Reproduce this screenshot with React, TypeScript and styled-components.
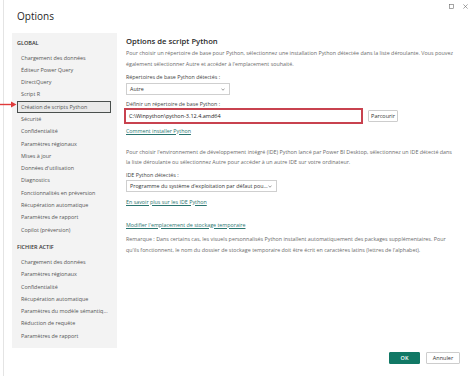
import React from "react";
import styled, { createGlobalStyle } from "styled-components";

const Global = createGlobalStyle`
  html, body { margin: 0; padding: 0; background: #ffffff; }
  body { font-family: "Open Sans", "Noto Sans", sans-serif; }
  * { box-sizing: border-box; }
`;

const Screen = styled.div`
  position: relative;
  width: 474px;
  height: 376px;
  overflow: hidden;
  background: #ffffff;
  padding-left: 3px;
`;

const Window = styled.div`
  height: 100%;
  border-left: 1px solid #e4e4e4;
  display: flex;
  flex-direction: column;
`;

const TitleBar = styled.div`
  height: 33px;
  display: flex;
  justify-content: space-between;
  align-items: flex-start;
  padding: 0 6px 0 13px;
`;

const Title = styled.h1`
  margin: 10px 0 0;
  font-size: 10px;
  font-weight: 400;
  line-height: 12px;
  color: #1f1f1f;
`;

const Controls = styled.div`
  display: flex;
  gap: 9px;
  padding-top: 4px;
  color: #6a6a6a;
`;

const Body = styled.div`
  height: 315px;
  display: flex;
  gap: 9px;
  padding-left: 8px;
`;

const Sidebar = styled.nav`
  width: 105px;
  height: 100%;
  background: #f3f3f3;
  padding: 4px 6px 0 5px;
`;

const SectionHead = styled.div<{ $first?: boolean }>`
  font-size: 5.5px;
  line-height: 12px;
  font-weight: 600;
  color: #333;
  margin-top: ${(p) => (p.$first ? "0" : "5.5px")};
  margin-bottom: 2.5px;
`;

const NavItem = styled.div<{ $active?: boolean }>`
  height: 12.3px;
  line-height: 11px;
  font-size: 5.4px;
  color: #555;
  padding-left: 3px;
  border: 1px solid ${(p) => (p.$active ? "#4a4f4d" : "transparent")};
  background: ${(p) => (p.$active ? "#e9e9e9" : "transparent")};
  white-space: nowrap;
  overflow: hidden;
`;

const Content = styled.main`
  flex: 1;
  padding-right: 18px;
  padding-top: 2px;
`;

const Heading = styled.h2`
  margin: 0;
  font-size: 7.7px;
  line-height: 12px;
  font-weight: 600;
  color: #2b2b2b;
`;

const Para = styled.p<{ $mt: number }>`
  margin: ${(p) => p.$mt}px 0 0;
  font-size: 5.35px;
  line-height: 10.5px;
  color: #6b6b6b;
`;

const Label = styled.div<{ $mt: number }>`
  margin-top: ${(p) => p.$mt}px;
  font-size: 5.35px;
  line-height: 8px;
  color: #444;
`;

const Select = styled.div<{ $w: number; $mt: number }>`
  margin-top: ${(p) => p.$mt}px;
  width: ${(p) => p.$w}px;
  height: 12px;
  border: 1px solid #cfcfcf;
  background: #fff;
  display: flex;
  align-items: center;
  justify-content: space-between;
  padding: 0 4px 0 3px;
  font-size: 5.35px;
  color: #333;
`;

const InputRow = styled.div`
  display: flex;
  align-items: center;
  gap: 5px;
  margin-left: -2px;
`;

const Highlight = styled.div`
  width: 239px;
  height: 16px;
  border: 2px solid #c8424f;
  background: #fff;
  display: flex;
  align-items: center;
  padding-left: 3px;
  font-size: 5.5px;
  color: #222;
`;

const Button = styled.button<{ $primary?: boolean; $w: number }>`
  width: ${(p) => p.$w}px;
  height: 12px;
  padding: 0;
  font-family: inherit;
  font-size: 5.5px;
  font-weight: ${(p) => (p.$primary ? 600 : 500)};
  color: ${(p) => (p.$primary ? "#fff" : "#333")};
  background: ${(p) => (p.$primary ? "#117865" : "#fff")};
  border: 1px solid ${(p) => (p.$primary ? "#117865" : "#cdcdcd")};
  border-radius: 1px;
`;

const Link = styled.a<{ $mt: number }>`
  display: block;
  margin-top: ${(p) => p.$mt}px;
  font-size: 5.35px;
  line-height: 9px;
  color: #2a7570;
  text-decoration: underline;
`;

const Footer = styled.div`
  display: flex;
  justify-content: flex-end;
  gap: 6px;
  padding: 4px 14px 0 0;
`;

const Arrow = styled.svg`
  position: absolute;
  left: 0;
  top: 101px;
`;

const Chevron = () => (
  <svg width="4" height="3" viewBox="0 0 4 3">
    <path d="M0.5 0.8 L2 2.2 L3.5 0.8" fill="none" stroke="#555" strokeWidth="0.6" />
  </svg>
);

const globalItems = [
  "Chargement des données",
  "Éditeur Power Query",
  "DirectQuery",
  "Script R",
  "Création de scripts Python",
  "Sécurité",
  "Confidentialité",
  "Paramètres régionaux",
  "Mises à jour",
  "Données d'utilisation",
  "Diagnostics",
  "Fonctionnalités en préversion",
  "Récupération automatique",
  "Paramètres de rapport",
  "Copilot (préversion)",
];

const fileItems = [
  "Chargement des données",
  "Paramètres régionaux",
  "Confidentialité",
  "Récupération automatique",
  "Paramètres du modèle sémantiq...",
  "Réduction de requête",
  "Paramètres de rapport",
];

export default function App() {
  return (
    <Screen>
      <Global />
      <Window>
        <TitleBar>
          <Title>Options</Title>
          <Controls>
            <svg width="5" height="5" viewBox="0 0 5 5">
              <rect x="0.5" y="0.5" width="4" height="4" fill="none" stroke="#6a6a6a" strokeWidth="0.6" />
            </svg>
            <svg width="5" height="5" viewBox="0 0 5 5">
              <path d="M0.4 0.4 L4.6 4.6 M4.6 0.4 L0.4 4.6" stroke="#6a6a6a" strokeWidth="0.6" />
            </svg>
          </Controls>
        </TitleBar>
        <Body>
          <Sidebar>
            <SectionHead $first>GLOBAL</SectionHead>
            {globalItems.map((t) => (
              <NavItem key={t} $active={t === "Création de scripts Python"}>
                {t}
              </NavItem>
            ))}
            <SectionHead>FICHIER ACTIF</SectionHead>
            {fileItems.map((t, i) => (
              <NavItem key={t + i}>{t}</NavItem>
            ))}
          </Sidebar>
          <Content>
            <Heading>Options de script Python</Heading>
            <Para $mt={1.25}>
              Pour choisir un répertoire de base pour Python, sélectionnez une installation Python détectée dans la
              liste déroulante. Vous pouvez également sélectionner Autre et accéder à l'emplacement souhaité.
            </Para>
            <Label $mt={3.75}>Répertoires de base Python détectés :</Label>
            <Select $w={104} $mt={2}>
              <span>Autre</span>
              <Chevron />
            </Select>
            <Label $mt={4.5}>Définir un répertoire de base Python :</Label>
            <InputRow>
              <Highlight>C:\Winpython\python-3.12.4.amd64</Highlight>
              <Button $w={30}>Parcourir</Button>
            </InputRow>
            <Link $mt={3}>Comment installer Python</Link>
            <Para $mt={11}>
              Pour choisir l'environnement de développement intégré (IDE) Python lancé par Power BI Desktop,
              sélectionnez un IDE détecté dans la liste déroulante ou sélectionnez Autre pour accéder à un autre IDE
              sur votre ordinateur.
            </Para>
            <Label $mt={3.5}>IDE Python détectés :</Label>
            <Select $w={151} $mt={1}>
              <span>Programme du système d'exploitation par défaut pou...</span>
              <Chevron />
            </Select>
            <Link $mt={5.5}>En savoir plus sur les IDE Python</Link>
            <Link $mt={14}>Modifier l'emplacement de stockage temporaire</Link>
            <Para $mt={4.75}>
              Remarque : Dans certains cas, les visuels personnalisés Python installent automatiquement des packages
              supplémentaires. Pour qu'ils fonctionnent, le nom du dossier de stockage temporaire doit être écrit en
              caractères latins (lettres de l'alphabet).
            </Para>
          </Content>
        </Body>
        <Footer>
          <Button $primary $w={31}>OK</Button>
          <Button $w={34}>Annuler</Button>
        </Footer>
      </Window>
      <Arrow width="17" height="7" viewBox="0 0 17 7">
        <path d="M0 3.5 H12" stroke="#e03a3a" strokeWidth="1.4" />
        <path d="M11 0.6 L16.5 3.5 L11 6.4 Z" fill="#e03a3a" />
      </Arrow>
    </Screen>
  );
}
